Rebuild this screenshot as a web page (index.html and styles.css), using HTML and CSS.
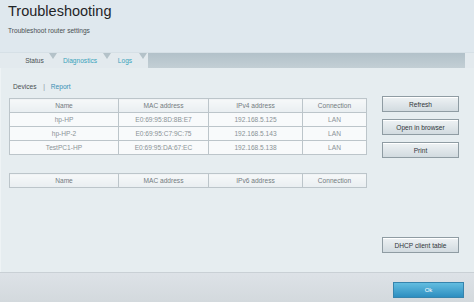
FILE: index.html
```html
<!DOCTYPE html>
<html lang="en">
<head>
  <meta charset="UTF-8">
  <meta name="viewport" content="width=device-width, initial-scale=1.0">
  <title>Troubleshooting</title>
  <link rel="stylesheet" href="styles.css">
</head>
<body>
  <div class="page">
    <header class="head">
      <h1>Troubleshooting</h1>
      <p>Troubleshoot router settings</p>
    </header>

    <nav class="tabs">
      <span class="tab tab-status active">Status</span>
      <span class="tab tab-diag">Diagnostics</span>
      <span class="tab tab-logs">Logs</span>
      <span class="tab-band"></span>
    </nav>

    <main class="content">
      <div class="subnav">
        <span class="sub-current">Devices</span>
        <span class="sub-sep">|</span>
        <a class="sub-link" href="#">Report</a>
      </div>

      <div class="row">
        <table class="grid">
          <tr>
            <th class="c-name">Name</th>
            <th class="c-mac">MAC address</th>
            <th class="c-ip">IPv4 address</th>
            <th class="c-conn">Connection</th>
          </tr>
          <tr>
            <td>hp-HP</td>
            <td>E0:69:95:8D:8B:E7</td>
            <td>192.168.5.125</td>
            <td>LAN</td>
          </tr>
          <tr>
            <td>hp-HP-2</td>
            <td>E0:69:95:C7:9C:75</td>
            <td>192.168.5.143</td>
            <td>LAN</td>
          </tr>
          <tr>
            <td>TestPC1-HP</td>
            <td>E0:69:95:DA:67:EC</td>
            <td>192.168.5.138</td>
            <td>LAN</td>
          </tr>
        </table>

        <div class="actions">
          <button class="btn">Refresh</button>
          <button class="btn">Open in browser</button>
          <button class="btn">Print</button>
        </div>
      </div>

      <div class="row row-v6">
        <table class="grid">
          <tr>
            <th class="c-name">Name</th>
            <th class="c-mac">MAC address</th>
            <th class="c-ip">IPv6 address</th>
            <th class="c-conn">Connection</th>
          </tr>
        </table>
      </div>

      <div class="row row-dhcp">
        <button class="btn">DHCP client table</button>
      </div>
    </main>

    <footer class="foot">
      <button class="btn-ok">Ok</button>
    </footer>
  </div>
</body>
</html>
```

FILE: styles.css
```css
* {
  box-sizing: border-box;
}

body {
  margin: 0;
  font-family: "Liberation Sans", Arial, sans-serif;
  background: #e6edf0;
}

.page {
  width: 474px;
  height: 302px;
  display: flex;
  flex-direction: column;
  overflow: hidden;
}

/* header */
.head {
  height: 53px;
  padding: 2px 8px 0;
  background: #dfe8ee;
  border-bottom: 1px solid #d6e0e6;
}

.head h1 {
  margin: 0;
  font-size: 14.5px;
  line-height: 18px;
  font-weight: normal;
  color: #1f2427;
}

.head p {
  margin: 6px 0 0;
  font-size: 6.6px;
  line-height: 9px;
  color: #4a4f52;
}

/* tabs */
.tabs {
  height: 15px;
  display: flex;
  padding-left: 16px;
  padding-right: 9px;
  background: #e3eaee;
}

.tab {
  position: relative;
  font-size: 6.6px;
  line-height: 15px;
  text-align: center;
  color: #3aa3bb;
}

.tab::after {
  content: "";
  position: absolute;
  top: 0;
  right: -4px;
  border-left: 4px solid transparent;
  border-right: 4px solid transparent;
  border-top: 6px solid #b4c2c9;
}

.tab.active {
  color: #4b5154;
}

.tab-status {
  width: 37px;
}

.tab-diag {
  width: 54px;
}

.tab-logs {
  width: 36px;
  margin-right: 5px;
}

.tab-band {
  flex: 1;
  background: linear-gradient(#b2c1c9, #c3cfd5);
}

/* content */
.content {
  flex: 1;
  padding: 14px 0 0 8px;
  background: #e6edf0;
  border-left: 1px solid #eef3f5;
}

.subnav {
  font-size: 6.6px;
  line-height: 9px;
  padding-left: 4px;
  color: #4a4f52;
}

.sub-sep {
  margin: 0 4px 0 5px;
  color: #8a9296;
}

.sub-link {
  color: #3b8fb5;
  text-decoration: none;
}

.row {
  display: flex;
  gap: 15px;
  margin-top: 7px;
}

.row-v6 {
  margin-top: 15px;
}

.row-dhcp {
  margin-top: 49px;
  padding-left: 373px;
}

.grid {
  width: 358px;
  border-collapse: collapse;
  border: 1px solid #a9b4ba;
  font-size: 6.6px;
  color: #8a9296;
  text-align: center;
  align-self: flex-start;
}

.grid th,
.grid td {
  border: 1px solid #bcc5ca;
  padding: 0;
  font-weight: normal;
}

.grid th {
  height: 14px;
  background: linear-gradient(#f6f8f9, #e9eef1);
  color: #737b80;
}

.grid td {
  height: 14px;
  background: #f8fafb;
}

.c-name {
  width: 109px;
}

.c-mac {
  width: 90px;
}

.c-ip {
  width: 94px;
}

.actions {
  display: flex;
  flex-direction: column;
  gap: 7px;
  margin-top: -2px;
}

.btn {
  width: 77px;
  height: 16px;
  padding: 0;
  border: 1px solid #8f9ca3;
  background: linear-gradient(#eef2f4, #d2dbe0);
  font-family: "Liberation Sans", Arial, sans-serif;
  font-size: 6.6px;
  color: #30363a;
  box-shadow: inset 0 1px 0 #ffffff;
}

/* footer */
.foot {
  height: 30px;
  display: flex;
  justify-content: flex-end;
  padding: 9px 10px 0 0;
  border-top: 1px solid #c9d0d5;
  background: linear-gradient(#dde2e7, #d3d9dd);
}

.btn-ok {
  width: 71px;
  height: 16px;
  padding: 0;
  border: 1px solid #3684ad;
  background: linear-gradient(#63bde0, #2d8ec0);
  font-family: "Liberation Sans", Arial, sans-serif;
  font-size: 6px;
  color: #ffffff;
}
```
